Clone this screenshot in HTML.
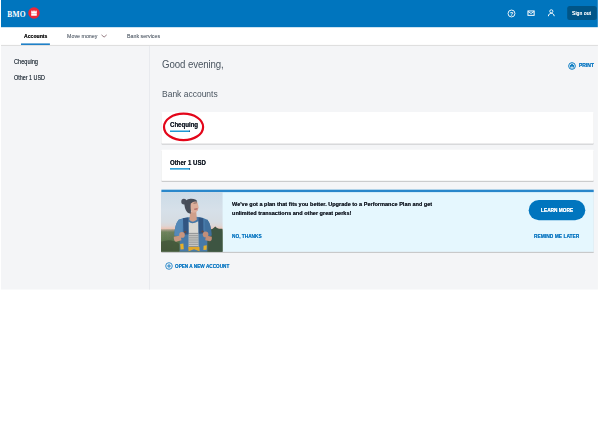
<!DOCTYPE html>
<html><head><meta charset="utf-8">
<style>
*{box-sizing:border-box;margin:0;padding:0}
html,body{width:600px;height:428px;background:#fff;overflow:hidden;font-family:"Liberation Sans",sans-serif;}
.abs{position:absolute}
#hdr{left:1px;top:0;width:596.7px;height:27.4px;background:#0075be}
#nav{left:1px;top:27.4px;width:596.7px;height:18.2px;background:#fff;border-bottom:1px solid #dcdcdc}
#main{left:1px;top:45.6px;width:596.9px;height:243.9px;background:#f4f5f7}
#side{left:1px;top:45.6px;width:149px;height:243.9px;background:#f4f5f7;border-right:1px solid #e8eaee}
.t{position:absolute;white-space:nowrap;line-height:1;text-shadow:0 0 .4px currentColor}
.ns{text-shadow:none}.ls{text-shadow:0 0 .3px currentColor}
.card{position:absolute;background:#fff;box-shadow:0 1px 1.5px rgba(0,0,0,.28);border-radius:1px}
</style></head><body>
<svg class="abs" style="left:0;top:0" width="600" height="428" viewBox="0 0 600 428">
<rect x="1" y="45" width="596.9" height="244.5" fill="#f4f5f7"/>
<rect x="1" y="44.9" width="596.9" height="1.1" fill="#dfdfdf"/>
<rect x="149" y="46" width="1" height="243.5" fill="#e8eaee"/>
<rect x="21" y="43.4" width="28.9" height="1.6" fill="#1f80c7"/>
<rect x="1" y="0" width="596.8" height="27.2" fill="#0075be"/>
<rect x="567.2" y="6" width="29.6" height="14.1" rx="2.5" fill="#005587"/>
</svg>
<div class="t" style="left:7.2px;top:9.6px;font:bold 7.5px 'Liberation Serif',serif;color:#fff;letter-spacing:.2px;text-shadow:none">BMO</div>
<svg class="abs" style="left:28.3px;top:7.2px" width="12" height="12" viewBox="0 0 12 12"><circle cx="6" cy="6" r="5.75" fill="#ee2737"/><path d="M3.2 3.1 L4.15 4.7 L5.05 3.1 L6 4.7 L6.95 3.1 L7.85 4.7 L8.8 3.1 V6.65 H3.2Z M3.2 7 H8.8 V8.8 H3.2Z" fill="#fff"/></svg>
<svg class="abs" style="left:506.6px;top:8.7px" width="9" height="9" viewBox="0 0 9 9"><circle cx="4.5" cy="4.5" r="3.45" fill="none" stroke="#fff" stroke-width="0.9"/><text x="4.5" y="6.6" font-size="5.5" font-weight="bold" fill="#fff" text-anchor="middle" font-family="Liberation Sans">?</text></svg>
<svg class="abs" style="left:527px;top:10.1px" width="8" height="6.4" viewBox="0 0 8 6.4"><rect x="0.95" y="0.95" width="6.2" height="4.4" fill="none" stroke="#fff" stroke-width="1"/><path d="M1 1.5 L4.05 3.5 L7.1 1.5" fill="none" stroke="#fff" stroke-width="0.9"/></svg>
<svg class="abs" style="left:547px;top:9.4px" width="9" height="8" viewBox="0 0 9 8"><circle cx="4.3" cy="2.3" r="1.55" fill="none" stroke="#fff" stroke-width="0.9"/><path d="M1.4 7.2 C1.4 3.4 7.2 3.4 7.2 7.2" fill="none" stroke="#fff" stroke-width="1"/></svg>

<div class="t ls" style="left:572.4px;top:10.4px;font:5.59px 'Liberation Sans',sans-serif;transform:scaleX(.93);transform-origin:0 0;color:#fff">Sign out</div>


<div class="t" style="left:23.8px;top:33.2px;font:bold 5.54px 'Liberation Sans',sans-serif;transform:scaleX(.93);transform-origin:0 0;color:#222">Accounts</div>

<div class="t ls" style="left:66.8px;top:33.1px;font:5.91px 'Liberation Sans',sans-serif;transform:scaleX(.9);transform-origin:0 0;color:#727a84">Move money</div>
<svg class="abs" style="left:100.8px;top:33.9px" width="7" height="5" viewBox="0 0 7 5"><path d="M0.5 0.9 L3.1 3.1 L5.7 0.9" fill="none" stroke="#8b6f76" stroke-width="0.9"/></svg>
<div class="t ls" style="left:126.8px;top:33.1px;font:5.91px 'Liberation Sans',sans-serif;transform:scaleX(.9);transform-origin:0 0;color:#727a84">Bank services</div>



<div class="t ls" style="left:14px;top:58.4px;font:6.5px 'Liberation Sans',sans-serif;transform:scaleX(.862);transform-origin:0 0;color:#3c4650">Chequing</div>
<div class="t ls" style="left:14px;top:74.3px;font:6.3px 'Liberation Sans',sans-serif;transform:scaleX(.857);transform-origin:0 0;color:#3c4650">Other 1 USD</div>

<div class="t ns" id="ge" style="left:161.6px;top:59.1px;font:10px 'Liberation Sans',sans-serif;transform:scaleX(.968);transform-origin:0 0;color:#4a5560;letter-spacing:-.1px">Good evening,</div>
<div class="t ns" style="left:161.7px;top:89.3px;font:9.14px 'Liberation Sans',sans-serif;transform:scaleX(.93);transform-origin:0 0;color:#4a5560">Bank accounts</div>
<svg class="abs" style="left:568.3px;top:61.7px" width="8" height="8" viewBox="0 0 8 8"><circle cx="4" cy="4" r="3.35" fill="none" stroke="#0f7fc4" stroke-width="1"/><rect x="2.9" y="1.9" width="2.2" height="1" fill="#0f7fc4"/><rect x="2" y="3" width="4" height="2.3" fill="#0f7fc4"/><rect x="2.9" y="4.5" width="2.2" height="1.5" fill="#fff" stroke="#0f7fc4" stroke-width="0.4"/></svg>
<div class="t" style="left:578.6px;top:61.9px;font:bold 5.38px 'Liberation Sans',sans-serif;transform:scaleX(.93);transform-origin:0 0;color:#147cc4">PRINT</div>

<svg class="abs" style="left:150px;top:100px" width="450" height="160" viewBox="150 100 450 160">
<defs><filter id="sh" x="-2%" y="-10%" width="104%" height="125%"><feDropShadow dx="0" dy="0.7" stdDeviation="0.55" flood-color="#000" flood-opacity="0.32"/></filter></defs>
<rect x="161.4" y="112.1" width="432.3" height="31.4" rx="0.8" fill="#fff" filter="url(#sh)"/>
<rect x="161.4" y="149.5" width="432.3" height="31.2" rx="0.8" fill="#fff" filter="url(#sh)"/>
<rect x="161.4" y="189.7" width="432.3" height="62.1" fill="#e5f7fe" filter="url(#sh)"/>
<rect x="161.4" y="189.7" width="432.3" height="2.4" fill="#2987cb"/>
<rect x="528.7" y="200" width="56.6" height="20.3" rx="10.15" fill="#0075be"/>
</svg>
<div class="t" style="left:170px;top:121.3px;font:bold 6.56px 'Liberation Sans',sans-serif;transform:scaleX(.93);transform-origin:0 0;color:#1f2630">Chequing</div>
<svg class="abs" style="left:160px;top:125px" width="40" height="50" viewBox="160 125 40 50"><rect x="170" y="130.5" width="20" height="1.5" fill="#1d9ad6"/><rect x="170" y="168.1" width="20" height="1.5" fill="#1d9ad6"/><rect x="189" y="130.6" width="1" height="1.4" fill="#1b5f90"/><rect x="189" y="168.2" width="1" height="1.4" fill="#1b5f90"/></svg>
<svg class="abs" style="left:160px;top:111px" width="46" height="32" viewBox="0 0 46 32"><ellipse cx="23.55" cy="15.9" rx="19.55" ry="13.2" fill="none" stroke="#e3061a" stroke-width="2.2"/></svg>

<div class="t" style="left:170px;top:158.9px;font:bold 6.56px 'Liberation Sans',sans-serif;transform:scaleX(.93);transform-origin:0 0;color:#1f2630">Other 1 USD</div>


<svg class="abs" style="left:161.3px;top:192px" width="61.6" height="59.8" viewBox="0 0 61.6 60.1" preserveAspectRatio="none">
<defs>
<linearGradient id="sky" x1="0" y1="0" x2="0" y2="1"><stop offset="0" stop-color="#ccdbe7"/><stop offset="0.3" stop-color="#d6e0e9"/><stop offset="0.5" stop-color="#d6dce2"/><stop offset="0.565" stop-color="#dcd6d6"/><stop offset="0.61" stop-color="#ecc7ba"/><stop offset="0.635" stop-color="#a8a08a"/><stop offset="0.67" stop-color="#71865f"/><stop offset="0.8" stop-color="#5f7850"/><stop offset="1" stop-color="#4f663f"/></linearGradient>
<linearGradient id="dk" x1="0" y1="0" x2="1" y2="0"><stop offset="0" stop-color="#3a4b3a" stop-opacity="0"/><stop offset="0.55" stop-color="#3a4b3a" stop-opacity="0.25"/><stop offset="0.8" stop-color="#3d5443" stop-opacity="0.85"/><stop offset="1" stop-color="#3d5443" stop-opacity="0.9"/></linearGradient>
<filter id="bl" x="-10%" y="-10%" width="120%" height="120%"><feGaussianBlur stdDeviation="0.45"/></filter>
<clipPath id="pc"><rect width="61.6" height="60.1"/></clipPath>
</defs>
<rect width="61.6" height="60.1" fill="url(#sky)"/>
<g clip-path="url(#pc)"><g filter="url(#bl)">
<rect x="0" y="37.5" width="61.6" height="23" fill="url(#dk)"/>
<path d="M50 38 L52 36.8 L54.3 34.6 L56 36.2 L58 37 L61.6 37 V60.1 H48Z" fill="#3d5443"/>
<path d="M0 50 Q10 46 18 52 L18 60.1 H0Z" fill="#3f5238" opacity="0.7"/>
<!-- jacket -->
<path d="M18.7 60.1 L18.9 49 L18.7 44.7 L13.3 43.6 Q13.6 33 17.7 28 Q23 25.2 29 25.5 L35.5 25 Q42 25.6 46.4 28 Q50.3 33 50.5 43.6 L46.3 44.6 L46.4 60.1Z" fill="#4679a8"/>
<path d="M13.3 43.6 Q13.6 33 17.7 28 L22 27 L21.5 44.8 Z" fill="#5589b8"/>
<path d="M46.4 28 Q50.3 33 50.5 43.6 L44.5 45 L44 29Z" fill="#3f6f9e"/>
<!-- arms -->
<path d="M12.8 45 L19.5 43.6 L20.5 48.6 L15 50 Q12.6 49.5 12.8 45Z" fill="#c89781"/>
<path d="M50.8 45 L45 43.6 L44.2 48.4 L49 49.6 Q51.2 49 50.8 45Z" fill="#c08d78"/>
<!-- shirt -->
<path d="M27.6 30 Q31 33 37.3 29.5 L37.6 55.3 L27.6 55.3Z" fill="#d9d8d3"/>
<g stroke="#73777b" stroke-width="0.75"><path d="M27.7 41.6H37.5M27.7 43.5H37.5M27.7 45.4H37.5M27.7 47.3H37.5M27.7 49.2H37.5M27.7 51.1H37.5M27.7 53H37.5M27.7 54.8H37.5"/></g>
<!-- straps -->
<path d="M22 26.5 L27.2 25.6 L27.5 42.5 L22.6 43Z" fill="#335682"/>
<path d="M37.5 25.4 L42.2 26.3 L42.4 41.6 L37.8 42Z" fill="#335682"/>
<!-- hands -->
<ellipse cx="21" cy="43.2" rx="2.8" ry="2.9" fill="#c9957f"/>
<ellipse cx="44.6" cy="42.6" rx="2.8" ry="2.9" fill="#c28e79"/>
<ellipse cx="24.2" cy="40.3" rx="1.2" ry="1" fill="#6a4a40"/>
<ellipse cx="41.6" cy="39.6" rx="1.2" ry="1" fill="#6a4a40"/>
<!-- lower -->
<path d="M19.2 52.2 L22.4 51.8 L22.8 57.6 L19.6 57.9Z" fill="#e6b02c"/>
<path d="M27.2 55.2 L38.4 55.2 L38.6 59.6 L33 57.6 L27.6 59.6Z" fill="#e2a829"/>
<path d="M42.6 54 L45.8 53.4 L45.6 58 L42.4 58.4Z" fill="#e6b02c"/>
<!-- neck -->
<path d="M29.2 20 L35.3 19.5 L35.8 28 Q32 31.5 28.3 28.2Z" fill="#cf9f8a"/>
<!-- hair -->
<ellipse cx="22.9" cy="9.7" rx="2.6" ry="2.8" fill="#4b515d"/>
<path d="M23.3 12.5 Q24 7.3 29.4 6.9 Q35 6.6 36.3 9.6 L31 11.5 L30 17 L29.8 21.8 Q25.5 21.5 24 16Z" fill="#474d59"/>
<!-- face -->
<path d="M29.8 11.5 Q33 8.8 36.3 10 L37.3 13.5 L37.6 15.5 L36.8 18.5 Q34.5 21.5 31 20.5 Q29 18 29.8 11.5Z" fill="#dcae9b"/>
<path d="M33 16.8 L36.6 16.2 L36.4 17.6 L33.5 18Z" fill="#b26a66"/>
<path d="M32.5 11.3 L36 10.8" stroke="#4a3a3a" stroke-width="0.6"/>
</g></g>
</svg>
<div class="t" style="left:232px;top:201.2px;font:bold 5.97px 'Liberation Sans',sans-serif;transform:scaleX(.93);transform-origin:0 0;color:#1f2630">We've got a plan that fits you better. Upgrade to a Performance Plan and get</div>
<div class="t" style="left:232px;top:210px;font:bold 5.97px 'Liberation Sans',sans-serif;transform:scaleX(.93);transform-origin:0 0;color:#1f2630">unlimited transactions and other great perks!</div>
<div class="t" style="left:232px;top:233px;font:bold 5.3px 'Liberation Sans',sans-serif;color:#147cc4;transform:scaleX(.9);transform-origin:0 0">NO, THANKS</div>

<div class="t" style="left:541px;top:207.4px;font:bold 5.3px 'Liberation Sans',sans-serif;color:#fff;transform:scaleX(.905);transform-origin:0 0">LEARN MORE</div>
<div class="t" style="left:534.3px;top:233.2px;font:bold 5.3px 'Liberation Sans',sans-serif;color:#147cc4;transform:scaleX(.925);transform-origin:0 0">REMIND ME LATER</div>

<svg class="abs" style="left:165px;top:262.2px" width="8" height="8" viewBox="0 0 8 8"><circle cx="4" cy="4" r="3.3" fill="none" stroke="#147cc4" stroke-width="0.85"/><path d="M4 2.1V5.9M2.1 4H5.9" stroke="#147cc4" stroke-width="0.95"/></svg>
<div class="t" style="left:175.2px;top:263px;font:bold 5.6px 'Liberation Sans',sans-serif;color:#147cc4;transform:scaleX(.835);transform-origin:0 0">OPEN A NEW ACCOUNT</div>
</body></html>
